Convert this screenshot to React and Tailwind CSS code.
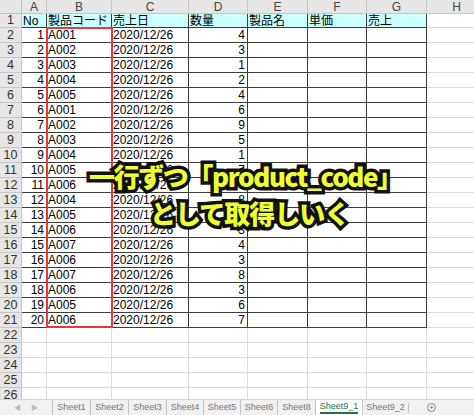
import React from "react";

const codes = ["A001", "A002", "A003", "A004", "A005", "A001", "A002", "A003", "A004", "A005", "A006", "A004", "A005", "A006", "A007", "A006", "A007", "A006", "A005", "A006"];
const qty = [4, 3, 1, 2, 4, 6, 9, 5, 1, 7, 5, 8, 6, 3, 4, 3, 8, 3, 6, 7];
const heads = ["No", "製品コード", "売上日", "数量", "製品名", "単価", "売上"];
const letters = ["A", "B", "C", "D", "E", "F", "G", "H"];
const tabs = [
  { name: "Sheet1", w: "w-[38px]" },
  { name: "Sheet2", w: "w-[38px]" },
  { name: "Sheet3", w: "w-[38px]" },
  { name: "Sheet4", w: "w-[37px]" },
  { name: "Sheet5", w: "w-[37px]" },
  { name: "Sheet6", w: "w-[37px]" },
  { name: "Sheet8", w: "w-[38px]" },
  { name: "Sheet9_1", w: "w-[47px]", active: true },
  { name: "Sheet9_2", w: "w-[46px]" },
];

const cellText = (r, c) => {
  if (r === 1) return heads[c - 1] || "";
  if (r > 21) return "";
  if (c === 1) return r - 1;
  if (c === 2) return codes[r - 2];
  if (c === 3) return "2020/12/26";
  if (c === 4) return qty[r - 2];
  return "";
};

const Cell = ({ r, c }) => {
  const inTable = r >= 1 && r <= 21 && c <= 7;
  const border = inTable ? "border-[#3c3c3c]" : "border-[#dadada]";
  const bg = r === 1 && c <= 7 ? "bg-[#ccffff]" : "bg-white";
  const align = r > 1 && (c === 1 || c === 4) ? "justify-end pr-[2px]" : "justify-start pl-[1px]";
  return (
    <div className={`flex items-center border-r border-b ${border} ${bg} ${align} overflow-hidden whitespace-nowrap text-[12px] leading-none text-black`}>
      {cellText(r, c)}
    </div>
  );
};

export default function App() {
  const rows = Array.from({ length: 26 }, (_, i) => i + 1);
  return (
    <div className="w-[474px] h-[415px] overflow-hidden flex flex-col bg-white font-['Liberation_Sans','Noto_Sans_CJK_JP',sans-serif]">
      <div className="relative flex-1 overflow-hidden">
        <div className="grid grid-cols-[22px_25px_65px_77px_59px_60px_59px_60px_60px] grid-rows-[14px_14px_repeat(25,15px)]">
          <div className="bg-[#e6e6e6] border-r border-b border-[#bdbdbd]" />
          {letters.map((l) => (
            <div key={l} className="flex items-center justify-center bg-[#e6e6e6] border-r border-b border-[#c6c6c6] text-[12px] leading-none text-[#444]">
              {l}
            </div>
          ))}
          {rows.map((r) => (
            <React.Fragment key={r}>
              <div className="flex items-center justify-center bg-[#e6e6e6] border-r border-b border-[#c6c6c6] text-[12.5px] leading-none text-[#333]">
                {r}
              </div>
              {letters.map((l, i) => (
                <Cell key={l} r={r} c={i + 1} />
              ))}
            </React.Fragment>
          ))}
        </div>

        {/* red selection box around B2:B21 */}
        <div className="absolute left-[46px] top-[27px] w-[67px] h-[301px] border-2 border-[#e23b3b]" />

        {/* caption */}
        <div className="absolute left-[89px] top-[160px] whitespace-nowrap text-[26px] leading-[32px] font-black text-[#eeff33] tracking-[-1.4px] [-webkit-text-stroke:7px_#111] [paint-order:stroke_fill] font-['Noto_Sans_CJK_JP',sans-serif]">
          一行ずつ「product_code」
        </div>
        <div className="absolute left-[150px] top-[197px] whitespace-nowrap text-[26px] leading-[32px] font-black text-[#eeff33] tracking-[-1px] [-webkit-text-stroke:7px_#111] [paint-order:stroke_fill] font-['Noto_Sans_CJK_JP',sans-serif]">
          として取得しいく
        </div>
      </div>

      <div className="h-[16px] flex items-stretch bg-[#f1f1f1] border-t border-[#d4d4d4] text-[9px] leading-none text-[#777]">
        <div className="w-[52px] flex items-center justify-center gap-[10px] text-[7px] text-[#bbb]">
          <span>◀</span>
          <span>▶</span>
        </div>
        {tabs.map((t) => (
          <div
            key={t.name}
            className={`${t.w} flex items-center justify-center border-l border-[#c4c4c4] ${t.active ? "bg-white text-[#217346]" : ""}`}
          >
            <span className={t.active ? "border-b-2 border-[#217346] pb-[1px]" : ""}>{t.name}</span>
          </div>
        ))}
        <div className="w-[1px] self-center h-[10px] bg-[#c4c4c4]" />
        <div className="flex-1 flex items-center pl-[18px]">
          <span className="w-[9px] h-[9px] rounded-full border border-[#888] flex items-center justify-center text-[8px] leading-none text-[#666]">+</span>
        </div>
      </div>
    </div>
  );
}
